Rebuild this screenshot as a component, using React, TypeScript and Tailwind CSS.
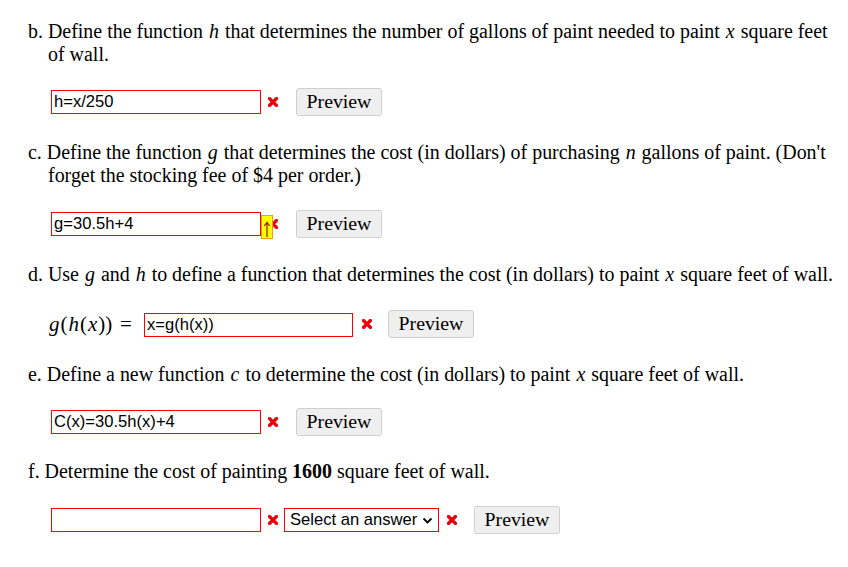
import React from "react";

const serif = { fontFamily: '"Liberation Serif", "Times New Roman", serif' };

function XMark() {
  return (
    <svg width="10" height="10" viewBox="0 0 10 10" className="block">
      <path d="M1.6 1.6 L8.4 8.4 M8.4 1.6 L1.6 8.4" stroke="#e8000b" strokeWidth="3.4" strokeLinecap="square" />
    </svg>
  );
}

function PreviewBtn() {
  return (
    <button
      className="h-[28px] w-[86px] rounded-[3px] border border-[#cfcfcf] bg-[#efefef] text-[19.8px] leading-none text-black"
      style={serif}
    >
      Preview
    </button>
  );
}

function Ans({ value, w = "w-[210px]" }: { value: string; w?: string }) {
  return (
    <input
      readOnly
      value={value}
      className={`${w} h-[24px] shrink-0 border border-[#ff0000] bg-white px-[2px] text-[16.6px] text-black outline-none font-['Liberation_Sans',Arial,sans-serif]`}
    />
  );
}

function M({ children }: { children: React.ReactNode }) {
  return <i className="font-['Liberation_Serif',serif] px-[1px]">{children}</i>;
}

function Q({ label, children, className = "" }: { label: string; children: React.ReactNode; className?: string }) {
  return (
    <div className={`pl-[20px] -indent-[20px] ${className}`}>
      {label}&nbsp;{children}
    </div>
  );
}

export default function App() {
  return (
    <div
      className="w-[848px] h-[567px] bg-white pl-[28px] pt-[20px] text-[19.95px] leading-[22.5px] text-black"
      style={serif}
    >
      <Q label="b.">
        Define the function <M>h</M> that determines the number of gallons of paint needed to paint <M>x</M> square feet
        <br />
        of wall.
      </Q>
      <div className="mt-[23px] flex h-[28px] items-center pl-[23px]">
        <Ans value="h=x/250" />
        <div className="ml-[7px]"><XMark /></div>
        <div className="ml-[18px]"><PreviewBtn /></div>
      </div>

      <Q label="c." className="mt-[25px]">
        Define the function <M>g</M> that determines the cost (in dollars) of purchasing <M>n</M> gallons of paint. (Don't
        <br />
        forget the stocking fee of $4 per order.)
      </Q>
      <div className="mt-[24px] flex h-[28px] items-center pl-[23px]">
        <Ans value="g=30.5h+4" />
        <div className="relative ml-[7px]">
          <XMark />
          <div className="absolute left-[-7px] top-[-4px] h-[24px] w-[12px] border border-[#f0a000] bg-[#ffff00]">
            <svg width="10" height="22" viewBox="0 0 10 22" className="block">
              <path d="M5 21 L5 7 M2.2 10 L5 6.5 L7.8 10" stroke="#8b1a00" strokeWidth="1.2" fill="none" />
            </svg>
          </div>
        </div>
        <div className="ml-[18px]"><PreviewBtn /></div>
      </div>

      <Q label="d." className="mt-[25px]">
        Use <M>g</M> and <M>h</M> to define a function that determines the cost (in dollars) to paint <M>x</M> square feet of wall.
      </Q>
      <div className="mt-[24.5px] flex h-[28px] items-center pl-[20px]">
        <span className="w-[72px] shrink-0 whitespace-nowrap text-[21px]">
          <M>g</M>(<M>h</M>(<M>x</M>))
        </span>
        <span className="w-[13px] shrink-0 text-[21px] leading-none">=</span>
        <div className="ml-[11px]"><Ans value="x=g(h(x))" w="w-[209px]" /></div>
        <div className="ml-[9px]"><XMark /></div>
        <div className="ml-[16px]"><PreviewBtn /></div>
      </div>

      <Q label="e." className="mt-[25px]">
        Define a new function <M>c</M> to determine the cost (in dollars) to paint <M>x</M> square feet of wall.
      </Q>
      <div className="mt-[22.5px] flex h-[28px] items-center pl-[23px]">
        <Ans value="C(x)=30.5h(x)+4" />
        <div className="ml-[7px]"><XMark /></div>
        <div className="ml-[18px]"><PreviewBtn /></div>
      </div>

      <Q label="f." className="mt-[24px]">
        Determine the cost of painting <b>1600</b> square feet of wall.
      </Q>
      <div className="mt-[23.5px] flex h-[28px] items-center pl-[23px]">
        <Ans value="" />
        <div className="ml-[7px]"><XMark /></div>
        <div className="relative ml-[6px] flex h-[24px] w-[155px] items-center border border-[#ff0000] bg-white pl-[5px] text-[16.6px] font-['Liberation_Sans',Arial,sans-serif]">
          <span>Select an answer</span>
          <svg width="11" height="8" viewBox="0 0 11 8" className="absolute right-[5px] top-[8px]">
            <path d="M1.5 1.5 L5.5 5.5 L9.5 1.5" stroke="#000" strokeWidth="1.8" fill="none" />
          </svg>
        </div>
        <div className="ml-[8px]"><XMark /></div>
        <div className="ml-[17px]"><PreviewBtn /></div>
      </div>
    </div>
  );
}
